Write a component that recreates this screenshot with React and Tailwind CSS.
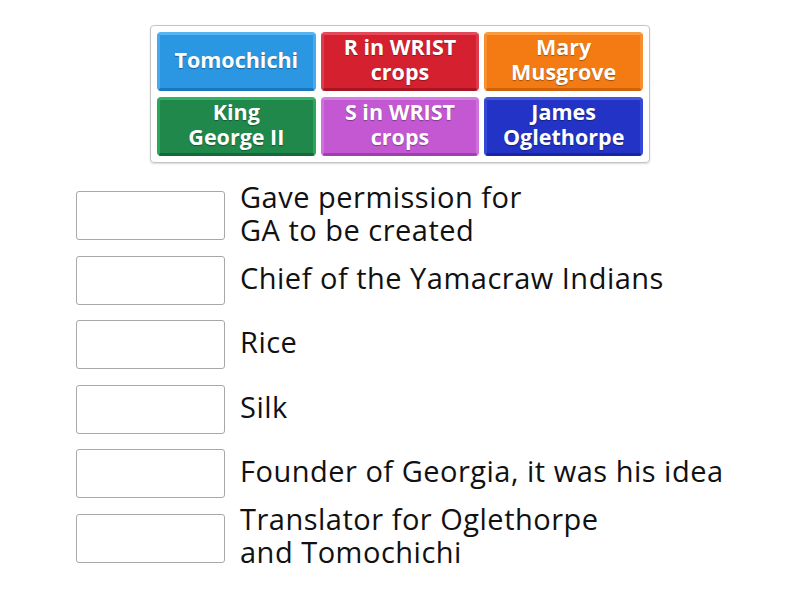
const tiles = [
  { text: ['Tomochichi'], cls: 'bg-[#2b96e2] border-t-[#55b4f2] border-x-[#48a9ec] border-b-[#1a76bd]' },
  { text: ['R in WRIST', 'crops'], cls: 'bg-[#d4202f] border-t-[#e4495a] border-x-[#df3b4b] border-b-[#a81624]' },
  { text: ['Mary', 'Musgrove'], cls: 'bg-[#f47b13] border-t-[#fa9a3f] border-x-[#f78f2e] border-b-[#d0620a]' },
  { text: ['King', 'George II'], cls: 'bg-[#1f884a] border-t-[#2fb563] border-x-[#29a85a] border-b-[#166838]' },
  { text: ['S in WRIST', 'crops'], cls: 'bg-[#c458d3] border-t-[#d57fe1] border-x-[#cf70dc] border-b-[#a040af]' },
  { text: ['James', 'Oglethorpe'], cls: 'bg-[#2233c5] border-t-[#4258de] border-x-[#3448d6] border-b-[#18259c]' },
];

const lines = [
  ['Gave permission for', 'GA to be created'],
  ['Chief of the Yamacraw Indians'],
  ['Rice'],
  ['Silk'],
  ['Founder of Georgia, it was his idea'],
  ['Translator for Oglethorpe', 'and Tomochichi'],
];

function Tile({ text, cls }) {
  return (
    <div
      className={`h-[59px] rounded-[4px] border-[3px] pb-[5px] flex flex-col items-center justify-center text-center text-white font-bold text-[21.5px] leading-[25px] whitespace-nowrap [text-shadow:0_1px_1px_rgba(0,0,0,0.35)] ${cls}`}
    >
      {text.map((t) => (
        <div key={t}>{t}</div>
      ))}
    </div>
  );
}

function Row({ text }) {
  return (
    <div className="flex items-center h-[49px]">
      <div className="w-[149px] h-[49px] shrink-0 border border-[#a8a8a8] rounded-[3px] bg-white" />
      <div className="ml-[15px] mb-[6px] text-[29px] leading-[33px] tracking-[0.5px] text-[#111] whitespace-nowrap">
        {text.map((t, i) => (
          <div key={i}>{t}</div>
        ))}
      </div>
    </div>
  );
}

export default function App() {
  return (
    <div className="w-[800px] h-[600px] bg-white font-['Open_Sans',sans-serif] overflow-hidden">
      <div className="flex justify-center pt-[25px]">
        <div className="w-[500px] border border-[#c4c4c4] rounded-[4px] p-[6px] grid grid-cols-3 gap-x-[5px] gap-y-[6px] shadow-[0_1px_2px_rgba(0,0,0,0.15)]">
          {tiles.map((t) => (
            <Tile key={t.text.join()} {...t} />
          ))}
        </div>
      </div>
      <div className="pl-[76px] pt-[28px] flex flex-col gap-[15.5px]">
        {lines.map((l, i) => (
          <Row key={i} text={l} />
        ))}
      </div>
    </div>
  );
}
